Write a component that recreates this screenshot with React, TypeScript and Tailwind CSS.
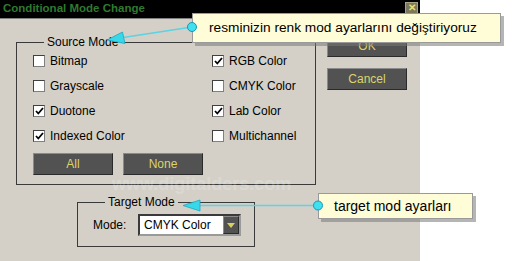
import React from "react";

const font = { fontFamily: '"Liberation Sans", Arial, sans-serif' };

function Check({ label, checked }: { label: string; checked?: boolean }) {
  return (
    <div className="flex h-[25px] items-center">
      <span className="flex h-[12px] w-[12px] items-center justify-center border border-t-[#404040] border-l-[#404040] border-r-[#808080] border-b-[#808080] bg-white">
        {checked ? (
          <svg width="9" height="8" viewBox="0 0 9 8">
            <path d="M1 4 L3.3 6.5 L8 1" fill="none" stroke="#000" strokeWidth="1.8" />
          </svg>
        ) : null}
      </span>
      <span className="ml-[5px] text-[12px] text-black">{label}</span>
    </div>
  );
}

function DarkButton({ label }: { label: string }) {
  return (
    <div className="flex h-[22px] w-[80px] items-center justify-center border border-t-[#8a8a8a] border-l-[#8a8a8a] border-r-[#2a2a2a] border-b-[#2a2a2a] bg-[#525252] text-[12px] text-[#dcd46a]">
      {label}
    </div>
  );
}

function Callout({ text, className }: { text: string; className: string }) {
  return (
    <div
      className={`absolute flex items-center border border-[#9a9a9a] bg-[#fffcd8] text-black shadow-[3px_3px_0_rgba(120,120,120,0.55)] ${className}`}
    >
      {text}
    </div>
  );
}

export default function App() {
  return (
    <div className="relative flex h-[261px] w-[515px] overflow-hidden bg-white" style={font}>
      <div className="flex h-full w-[420px] flex-col bg-[#d4d0c8]">
        <div className="flex h-[19px] items-center justify-between border-b border-[#808080] bg-black pl-[3px] pr-[2px]">
          <span className="text-[11.5px] font-bold text-[#2f7a30]">Conditional Mode Change</span>
          <span className="mb-[2px] flex h-[13px] w-[13px] items-center justify-center border border-[#a8a488] bg-[#7c7860] text-[10px] leading-none font-bold text-[#e8e070]">
            ✕
          </span>
        </div>

        <div className="flex">
          <fieldset className="ml-[16px] mt-[16px] w-[300px] border border-[#3a3a3a] pb-[9px] pl-[16px]">
            <legend className="ml-[11px] px-[3px] text-[12px] leading-[14px] text-black">Source Mode</legend>
            <div className="grid grid-cols-[179px_1fr] -mt-px">
              <Check label="Bitmap" />
              <Check label="RGB Color" checked />
              <Check label="Grayscale" />
              <Check label="CMYK Color" />
              <Check label="Duotone" checked />
              <Check label="Lab Color" checked />
              <Check label="Indexed Color" checked />
              <Check label="Multichannel" />
            </div>
            <div className="mt-[5px] flex gap-[10px]">
              <DarkButton label="All" />
              <DarkButton label="None" />
            </div>
          </fieldset>
          <div className="ml-[11px] mt-[16px] flex flex-col gap-[11px]">
            <DarkButton label="OK" />
            <DarkButton label="Cancel" />
          </div>
        </div>

        <fieldset className="ml-[77px] mt-[10px] w-[178px] border border-[#3a3a3a] pb-[10px] pl-[15px]">
          <legend className="ml-[12px] px-[3px] text-[12px] leading-[14px] text-black">Target Mode</legend>
          <div className="mt-[5px] flex items-center">
            <span className="w-[45px] text-[12px] text-black">Mode:</span>
            <div className="flex h-[22px] w-[103px] items-center border-2 border-t-[#3a3a3a] border-l-[#3a3a3a] border-r-[#9a9a9a] border-b-[#9a9a9a] bg-white">
              <span className="flex-1 pl-[4px] text-[12px] text-black">CMYK Color</span>
              <span className="flex h-[18px] w-[16px] items-center justify-center border border-t-[#8a8a8a] border-l-[#8a8a8a] border-r-[#2a2a2a] border-b-[#2a2a2a] bg-[#525252]">
                <svg width="8" height="5" viewBox="0 0 8 5">
                  <path d="M0 0 H8 L4 5 Z" fill="#d8d060" />
                </svg>
              </span>
            </div>
          </div>
        </fieldset>
      </div>

      <span className="pointer-events-none absolute left-[112px] top-[174px] text-[18px] leading-[20px] font-bold text-white opacity-[0.18]">
        www.digitalders.com
      </span>

      <svg className="pointer-events-none absolute left-0 top-0" width="515" height="261">
        <line x1="110" y1="39.5" x2="192" y2="27" stroke="#5cd2e2" strokeWidth="1.6" />
        <path d="M107 40 L122.5 32 L125 43.5 Z" fill="#36d8ea" stroke="#1aa8c0" strokeWidth="0.8" />
        <line x1="186" y1="205.5" x2="318" y2="205.5" stroke="#5cd2e2" strokeWidth="1.6" />
        <path d="M183 205.5 L200 200 L200 211 Z" fill="#36d8ea" stroke="#1aa8c0" strokeWidth="0.8" />
      </svg>

      <Callout text="resminizin renk mod ayarlarını değiştiriyoruz" className="left-[192px] top-[13px] h-[30px] w-[309px] pl-[16px] text-[13.7px]" />
      <Callout text="target mod ayarları" className="left-[318px] top-[193px] h-[26px] w-[155px] pl-[15px] text-[14px]" />

      <svg className="pointer-events-none absolute left-0 top-0" width="515" height="261">
        <circle cx="192" cy="27" r="4.5" fill="#40e0f0" stroke="#1898b0" strokeWidth="1" />
        <circle cx="318" cy="205.5" r="4.5" fill="#40e0f0" stroke="#1898b0" strokeWidth="1" />
      </svg>
    </div>
  );
}
